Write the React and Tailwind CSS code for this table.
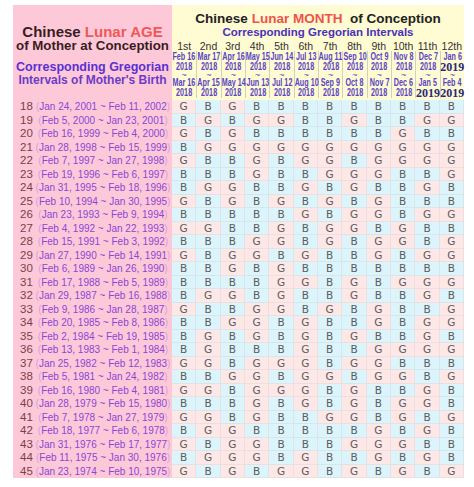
import React from "react";

const months = [
  ["1st", "Feb 16", "2018", "Mar 16", "2018"],
  ["2nd", "Mar 17", "2018", "Apr 15", "2018"],
  ["3rd", "Apr 16", "2018", "May 14", "2018"],
  ["4th", "May 15", "2018", "Jun 13", "2018"],
  ["5th", "Jun 14", "2018", "Jul 12", "2018"],
  ["6th", "Jul 13", "2018", "Aug 10", "2018"],
  ["7th", "Aug 11", "2018", "Sep 9", "2018"],
  ["8th", "Sep 10", "2018", "Oct 8", "2018"],
  ["9th", "Oct 9", "2018", "Nov 7", "2018"],
  ["10th", "Nov 8", "2018", "Dec 6", "2018"],
  ["11th", "Dec 7", "2018", "Jan 5", "2019"],
  ["12th", "Jan 6", "2019", "Feb 4", "2019"],
];

const rows = [
  [18, "Jan 24, 2001 ~ Feb 11, 2002", "GBGBBBBBBBBB"],
  [19, "Feb 5, 2000 ~ Jan 23, 2001", "BGBGGBBGBBGG"],
  [20, "Feb 16, 1999 ~ Feb 4, 2000", "GBGBBBBBBGBB"],
  [21, "Jan 28, 1998 ~ Feb 15, 1999", "BGGGGGGGGGGG"],
  [22, "Feb 7, 1997 ~ Jan 27, 1998", "GBBGBGGBGGGG"],
  [23, "Feb 19, 1996 ~ Feb 6, 1997", "BBBGBBGGGBBG"],
  [24, "Jan 31, 1995 ~ Feb 18, 1996", "BGGBBGBGBBGB"],
  [25, "Feb 10, 1994 ~ Jan 30, 1995", "GBGBGBGBGBBB"],
  [26, "Jan 23, 1993 ~ Feb 9, 1994", "BBBBBGBGGBGG"],
  [27, "Feb 4, 1992 ~ Jan 22, 1993", "GGBBGBGGBGBB"],
  [28, "Feb 15, 1991 ~ Feb 3, 1992", "BBBGGBGBGGBG"],
  [29, "Jan 27, 1990 ~ Feb 14, 1991", "GBGGBGBBGBGG"],
  [30, "Feb 6, 1989 ~ Jan 26, 1990", "BBGBGBBBBBBB"],
  [31, "Feb 17, 1988 ~ Feb 5, 1989", "BBBBGGBGBGGG"],
  [32, "Jan 29, 1987 ~ Feb 16, 1988", "BGGBGBBGBBGB"],
  [33, "Feb 9, 1986 ~ Jan 28, 1987", "GBBGGBGBGBBG"],
  [34, "Feb 20, 1985 ~ Feb 8, 1986", "BBGGBGBBGBGG"],
  [35, "Feb 2, 1984 ~ Feb 19, 1985", "BGBGBGBGBBGB"],
  [36, "Feb 13, 1983 ~ Feb 1, 1984", "BGBBBGBBGGGG"],
  [37, "Jan 25, 1982 ~ Feb 12, 1983", "GGBGGGBGGBBB"],
  [38, "Feb 5, 1981 ~ Jan 24, 1982", "BBGGBGGBGGBG"],
  [39, "Feb 16, 1980 ~ Feb 4, 1981", "GGBGGGBGBBGB"],
  [40, "Jan 28, 1979 ~ Feb 15, 1980", "BBBGBGBGBGGB"],
  [41, "Feb 7, 1978 ~ Jan 27, 1979", "GGBGBBGGBGBG"],
  [42, "Feb 18, 1977 ~ Feb 6, 1978", "BGGBBBBBGBGB"],
  [43, "Jan 31, 1976 ~ Feb 17, 1977", "GBGGBBBGGGBB"],
  [44, "Feb 11, 1975 ~ Jan 30, 1976", "BGGGBGBBGBGB"],
  [45, "Jan 23, 1974 ~ Feb 10, 1975", "GBGBGGBGBGBG"],
];

const sans = { fontFamily: '"Liberation Sans", Arial, sans-serif' };

function DateLabel({ text }) {
  return (
    <div className="h-[10px] leading-[10px] flex justify-center overflow-visible">
      <span className="inline-block whitespace-nowrap text-[10px] leading-[10px] font-bold text-[#5a44c4] scale-x-[0.72] origin-center">
        {text}
      </span>
    </div>
  );
}

function YearLabel({ text }) {
  if (text === "2019") {
    return (
      <div
        className="h-[10px] leading-[10px] flex justify-center text-[12px] font-bold text-[#2a2876]"
        style={{ fontFamily: '"Liberation Serif", "Times New Roman", serif' }}
      >
        2019
      </div>
    );
  }
  return <DateLabel text={text} />;
}

export default function App() {
  return (
    <div className="w-[474px] h-[487px] bg-white pt-[5px] pl-[13px]" style={sans}>
      <div className="w-[451px] flex flex-col">
        {/* Header */}
        <div className="flex h-[95px]">
          <div className="w-[159px] bg-[#fdc9d9] flex flex-col items-center pt-[20px]">
            <div className="text-[15px] font-bold leading-[14px] text-[#3a1c1e] whitespace-nowrap">
              Chinese <span className="text-[#f05858]">Lunar AGE</span>
            </div>
            <div className="text-[13.3px] font-bold leading-[13px] text-[#3a1c1e] whitespace-nowrap">
              of Mother at Conception
            </div>
            <div className="mt-[9px] text-[12.5px] font-bold leading-[13px] text-[#5a30d4] whitespace-nowrap">
              Corresponding Gregorian
            </div>
            <div className="text-[12px] font-bold leading-[12px] text-[#6a3cc8] whitespace-nowrap">
              Intervals of Mother's Birth
            </div>
          </div>
          <div className="flex-1 bg-[#fffbd2] flex flex-col">
            <div className="h-[36px] flex flex-col items-center pt-[6px]">
              <div className="text-[13.5px] font-bold leading-[15px] text-[#222] whitespace-nowrap">
                Chinese <span className="text-[#f0524a]">Lunar MONTH</span>&nbsp; of Conception
              </div>
              <div className="text-[11.5px] font-bold leading-[13px] text-[#4a32b8] whitespace-nowrap">
                Corresponding Gregorian Intervals
              </div>
            </div>
            <div className="grid grid-cols-12">
              {months.map((m, i) => (
                <div key={i} className="flex flex-col">
                  <div className="h-[10px] leading-[10px] text-center text-[10.5px] text-[#333] whitespace-nowrap">
                    {m[0]}
                  </div>
                  <div className={i === 0 ? "flex flex-col pt-[1px]" : "flex flex-col pt-[1px] border-l border-[#d2d0c0]"}>
                    <DateLabel text={m[1]} />
                    <YearLabel text={m[2]} />
                    <div className="h-[6px] leading-[6px] text-center text-[9px] text-[#5a44c4]">~</div>
                    <DateLabel text={m[3]} />
                    <YearLabel text={m[4]} />
                  </div>
                </div>
              ))}
            </div>
          </div>
        </div>

        {/* Body */}
        <div className="flex flex-col">
          {rows.map(([age, range, vals]) => (
            <div key={age} className="flex h-[13.5px]">
              <div className="w-[159px] bg-[#fdc9d9] flex items-center pl-[7px]">
                <span className="w-[14px] text-[11.5px] leading-[13px] text-[#7a3e48]">{age}</span>
                <span className="flex-1 text-center text-[10px] leading-[13px] text-[#8a46d6] whitespace-nowrap">
                  <span className="text-[#d6a0dc]">(</span>
                  {range}
                  <span className="text-[#d6a0dc]">)</span>
                </span>
              </div>
              <div className="flex-1 grid grid-cols-12">
                {vals.split("").map((v, j) => (
                  <div
                    key={j}
                    className={
                      v === "G"
                        ? "bg-[#fde7e7] border-r border-b border-[#eedede] flex items-center justify-center text-[10.5px] leading-[12px] text-[#5c5c5c]"
                        : "bg-[#dcf4fb] border-r border-b border-[#d8e6ea] flex items-center justify-center text-[10.5px] leading-[12px] text-[#5c5c5c]"
                    }
                    style={{ fontFamily: '"DejaVu Sans", Verdana, sans-serif' }}
                  >
                    {v}
                  </div>
                ))}
              </div>
            </div>
          ))}
        </div>
      </div>
    </div>
  );
}
